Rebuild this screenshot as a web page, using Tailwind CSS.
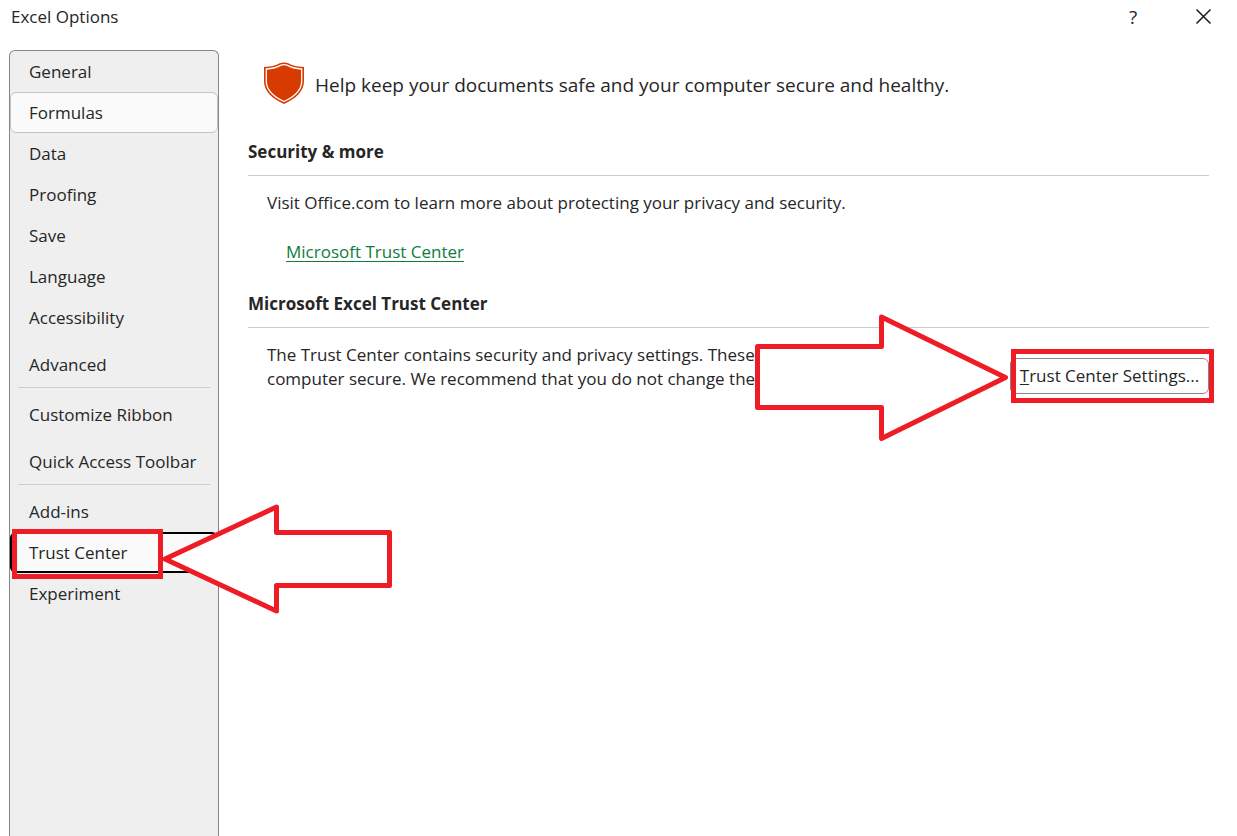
<!DOCTYPE html>
<html lang="en">
<head>
    <meta charset="UTF-8">
    <meta name="viewport" content="width=device-width, initial-scale=1.0">
    <title>Excel Options</title>
    <script src="https://cdn.jsdelivr.net/npm/@tailwindcss/browser@4"></script>
</head>
<body class="flex flex-col min-h-screen bg-white text-[#262626] text-[17px] leading-6 font-['Open_Sans','Noto_Sans',sans-serif]">

    <!-- Title bar -->
    <header class="flex items-center justify-between h-[34px] pl-[11px] pr-6 mb-4">
        <h1>Excel Options</h1>
        <div class="flex items-center gap-[54px]">
            <button type="button" aria-label="Help" class="w-4 text-center text-[19px]">?</button>
            <button type="button" aria-label="Close">
                <svg class="w-[18px] h-[18px]" viewBox="0 0 18 18" fill="none" stroke="#1a1a1a" stroke-width="1.5">
                    <path d="M1.500 1.500L15.500 15.500M15.500 1.500L1.500 15.500"/>
                </svg>
            </button>
        </div>
    </header>

    <div class="flex flex-1">
        <!-- Categories -->
        <nav class="w-[210px] shrink-0 ml-[9px] bg-[#efefef] border border-b-0 border-[#858585] rounded-t-md">
            <ul>
                <li><button type="button" class="w-full h-[41px] pl-[19px] text-left">General</button></li>
                <li><button type="button" class="w-full h-[41px] pl-[18px] text-left bg-[#fafafa] border border-[#c4c4c4] rounded-md">Formulas</button></li>
                <li><button type="button" class="w-full h-[41px] pl-[19px] text-left">Data</button></li>
                <li><button type="button" class="w-full h-[41px] pl-[19px] text-left">Proofing</button></li>
                <li><button type="button" class="w-full h-[41px] pl-[19px] text-left">Save</button></li>
                <li><button type="button" class="w-full h-[41px] pl-[19px] text-left">Language</button></li>
                <li><button type="button" class="w-full h-[41px] pl-[19px] text-left">Accessibility</button></li>
                <li class="mt-1.5"><button type="button" class="w-full h-[41px] pl-[19px] text-left">Advanced</button></li>
            </ul>
            <hr class="mx-2 mt-[2px] mb-1.5 border-[#cdcdcd]">
            <ul>
                <li><button type="button" class="w-full h-[41px] pl-[19px] text-left">Customize Ribbon</button></li>
                <li class="mt-1.5"><button type="button" class="w-full h-[41px] pl-[19px] text-left">Quick Access Toolbar</button></li>
            </ul>
            <hr class="mx-2 mt-[2px] mb-1.5 border-[#cdcdcd]">
            <ul>
                <li><button type="button" class="w-full h-[41px] pl-[19px] text-left">Add-ins</button></li>
                <li class="relative">
                    <button type="button" class="w-full h-[41px] pl-[17px] text-left bg-[#fafafa] border-2 border-black rounded-md">Trust Center</button>
                    <!-- Callout box and arrow -->
                    <div class="absolute left-[2px] -top-[3px] w-[151px] h-[50px] border-5 border-[#ee1c24]"></div>
                    <svg class="absolute left-[150px] -top-[30px] w-[236px] h-[112px]" viewBox="0 0 236 112" fill="white" stroke="#ee1c24" stroke-width="5" stroke-linejoin="round">
                        <path d="M5 57L116.500 5V30.500H229.500V83.500H116.500V109Z"/>
                    </svg>
                </li>
                <li><button type="button" class="w-full h-[41px] pl-[19px] text-left">Experiment</button></li>
            </ul>
        </nav>

        <main class="flex-1 min-w-0 pl-[29px] pr-7">
            <div class="flex items-center gap-[11px] pl-4 pt-3">
                <svg class="w-10 h-[42px] shrink-0" viewBox="0 0 40 42">
                    <path fill="#d83b01" d="M0 5C8 4.500 12 3.500 15 1.500C18 0 22 0 25 1.500C28 3.500 32 4.500 40 5V19C40 30 31 37 20 42C9 37 0 30 0 19Z"/>
                    <path fill="#d83b01" stroke="white" stroke-width="1.300" d="M2.300 7C9 6.500 13 5.500 16.500 3.400C19 2.200 21 2.200 23.500 3.400C27 5.500 31 6.500 37.700 7V19C37.700 28.500 30 35 20 39.500C10 35 2.300 28.500 2.300 19Z"/>
                </svg>
                <p class="pt-1 text-[19px]">Help keep your documents safe and your computer secure and healthy.</p>
            </div>

            <section class="mt-9">
                <h2 class="font-bold pb-[11px] border-b border-[#cdcdcd]">Security &amp; more</h2>
                <p class="mt-[15px] pl-[19px]">Visit Office.com to learn more about protecting your privacy and security.</p>
                <p class="mt-[25px] pl-[38px]"><a href="#" class="text-[#107c41] underline underline-offset-3">Microsoft Trust Center</a></p>
            </section>

            <section class="mt-7">
                <h2 class="font-bold pb-[11px] border-b border-[#cdcdcd]">Microsoft Excel Trust Center</h2>
                <div class="flex items-start justify-between mt-[15px] pl-[19px]">
                    <p class="whitespace-nowrap">The Trust Center contains security and privacy settings. These settings help keep your<br>computer secure. We recommend that you do not change these settings.</p>
                    <div class="relative shrink-0 mt-[15px]">
                        <button type="button" class="w-[199px] h-9 border border-[#858585] rounded-md bg-white"><span class="underline underline-offset-2">T</span>rust Center Settings...</button>
                        <!-- Callout box and arrow -->
                        <div class="absolute left-px -top-[9px] w-[203px] h-[54px] border-5 border-[#ee1c24]"></div>
                        <svg class="absolute -left-[256px] -top-[44px] w-[256px] h-[128px]" viewBox="0 0 256 128" fill="white" stroke="#ee1c24" stroke-width="5" stroke-linejoin="round">
                            <path d="M3.500 32.500H127.500V3L251.500 63.500L127.500 124.500V93.500H3.500Z"/>
                        </svg>
                    </div>
                </div>
            </section>
        </main>
    </div>

</body>
</html>
